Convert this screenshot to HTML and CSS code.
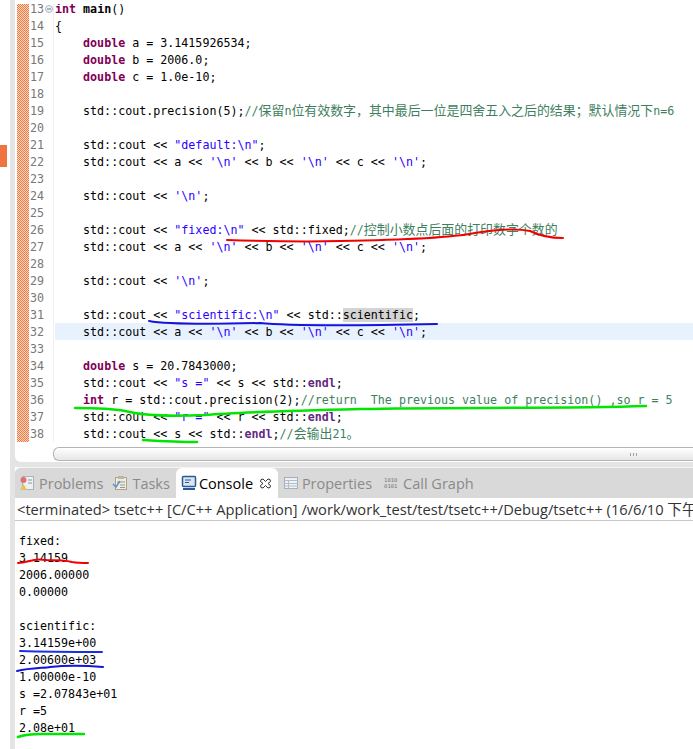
FILE: index.html
```html
<!DOCTYPE html>
<html lang="en">
<head>
  <meta charset="UTF-8">
  <title>tsetc++ - Eclipse</title>
  <link rel="stylesheet" href="styles.css">
</head>
<body>
  <div class="window">
    <!-- Left edge with the orange marker -->
    <div class="left-strip"><div class="marker"></div></div>

    <div class="main">
      <!-- Editor -->
      <div class="editor">
        <div class="lines">
          <div class="ruler"></div>
          <div class="rows">
            <div class="row"><span class="num">13</span><span class="fold"><svg width="8" height="8" viewBox="0 0 8 8"><circle cx="4" cy="4" r="3.500" fill="#eef2f6" stroke="#a9b6c4"/><path d="M2 4h4" stroke="#66788c"/></svg></span><span class="code"><b class="kw">int</b> <strong>main</strong>()</span></div>
            <div class="row"><span class="num">14</span><span class="fold"></span><span class="code">{</span></div>
            <div class="row"><span class="num">15</span><span class="fold"></span><span class="code">    <b class="kw">double</b> a = 3.1415926534;</span></div>
            <div class="row"><span class="num">16</span><span class="fold"></span><span class="code">    <b class="kw">double</b> b = 2006.0;</span></div>
            <div class="row"><span class="num">17</span><span class="fold"></span><span class="code">    <b class="kw">double</b> c = 1.0e-10;</span></div>
            <div class="row"><span class="num">18</span><span class="fold"></span><span class="code"></span></div>
            <div class="row"><span class="num">19</span><span class="fold"></span><span class="code">    std::cout.precision(5);<i class="cm">//<span class="cjk">保留</span>n<span class="cjk">位有效数字，其中最后一位是四舍五入之后的结果；默认情况下</span>n=6</i></span></div>
            <div class="row"><span class="num">20</span><span class="fold"></span><span class="code"></span></div>
            <div class="row"><span class="num">21</span><span class="fold"></span><span class="code">    std::cout &lt;&lt; <em class="str">"default:\n"</em>;</span></div>
            <div class="row"><span class="num">22</span><span class="fold"></span><span class="code">    std::cout &lt;&lt; a &lt;&lt; <em class="str">'\n'</em> &lt;&lt; b &lt;&lt; <em class="str">'\n'</em> &lt;&lt; c &lt;&lt; <em class="str">'\n'</em>;</span></div>
            <div class="row"><span class="num">23</span><span class="fold"></span><span class="code"></span></div>
            <div class="row"><span class="num">24</span><span class="fold"></span><span class="code">    std::cout &lt;&lt; <em class="str">'\n'</em>;</span></div>
            <div class="row"><span class="num">25</span><span class="fold"></span><span class="code"></span></div>
            <div class="row"><span class="num">26</span><span class="fold"></span><span class="code">    std::cout &lt;&lt; <em class="str">"fixed:\n"</em> &lt;&lt; std::fixed;<i class="cm">//<span class="cjk">控制小数点后面的打印数字个数的</span></i></span></div>
            <div class="row"><span class="num">27</span><span class="fold"></span><span class="code">    std::cout &lt;&lt; a &lt;&lt; <em class="str">'\n'</em> &lt;&lt; b &lt;&lt; <em class="str">'\n'</em> &lt;&lt; c &lt;&lt; <em class="str">'\n'</em>;</span></div>
            <div class="row"><span class="num">28</span><span class="fold"></span><span class="code"></span></div>
            <div class="row"><span class="num">29</span><span class="fold"></span><span class="code">    std::cout &lt;&lt; <em class="str">'\n'</em>;</span></div>
            <div class="row"><span class="num">30</span><span class="fold"></span><span class="code"></span></div>
            <div class="row"><span class="num">31</span><span class="fold"></span><span class="code">    std::cout &lt;&lt; <em class="str">"scientific:\n"</em> &lt;&lt; std::<span class="occurrence">scientific</span>;</span></div>
            <div class="row"><span class="num">32</span><span class="fold"></span><span class="code current">    std::cout &lt;&lt; a &lt;&lt; <em class="str">'\n'</em> &lt;&lt; b &lt;&lt; <em class="str">'\n'</em> &lt;&lt; c &lt;&lt; <em class="str">'\n'</em>;</span></div>
            <div class="row"><span class="num">33</span><span class="fold"></span><span class="code"></span></div>
            <div class="row"><span class="num">34</span><span class="fold"></span><span class="code">    <b class="kw">double</b> s = 20.7843000;</span></div>
            <div class="row"><span class="num">35</span><span class="fold"></span><span class="code">    std::cout &lt;&lt; <em class="str">"s ="</em> &lt;&lt; s &lt;&lt; std::<b class="fn">endl</b>;</span></div>
            <div class="row"><span class="num">36</span><span class="fold"></span><span class="code">    <b class="kw">int</b> r = std::cout.precision(2);<i class="cm">//return  The previous value of precision() ,so r = 5</i></span></div>
            <div class="row"><span class="num">37</span><span class="fold"></span><span class="code">    std::cout &lt;&lt; <em class="str">"r ="</em> &lt;&lt; r &lt;&lt; std::<b class="fn">endl</b>;</span></div>
            <div class="row"><span class="num">38</span><span class="fold"></span><span class="code">    std::cout &lt;&lt; s &lt;&lt; std::<b class="fn">endl</b>;<i class="cm">//<span class="cjk">会输出</span>21<span class="cjk">。</span></i></span></div>
          </div>
        </div>
        <div class="scrollbar"><span class="grip"></span></div>
      </div>

      <!-- Console view -->
      <div class="view">
        <div class="tabs">
          <div class="tab">
            <svg class="icon" width="16" height="16" viewBox="0 0 16 16"><rect x="3.500" y="1.500" width="11" height="13" fill="#f0f0f0" stroke="#a9b4c0"/><circle cx="4.500" cy="5" r="3" fill="#e07070"/><path d="M1 15l3.500-6 3.500 6z" fill="#e3c35c"/><path d="M9 5h4M9 8h4" stroke="#8a98a8"/></svg>
            <span>Problems</span>
          </div>
          <div class="tab tab-tasks">
            <svg class="icon" width="16" height="16" viewBox="0 0 16 16"><rect x="3.500" y="2.500" width="11" height="12" fill="#f2ecd8" stroke="#a9a68c"/><rect x="6" y="1" width="6" height="3" fill="#b8b8a8"/><path d="M5 7h8M8 10h5M8 12.500h5" stroke="#8c98a8"/><path d="M1 9l3 3 4-6" fill="none" stroke="#5a94c8" stroke-width="1.500"/></svg>
            <span>Tasks</span>
          </div>
          <div class="tab tab-active">
            <svg class="icon" width="16" height="16" viewBox="0 0 16 16"><rect x="1.500" y="1.500" width="13" height="10" rx="1" fill="#dbe6f2" stroke="#2a5a94" stroke-width="1.500"/><path d="M4 5h6M4 7.500h4" stroke="#2a5a94"/><path d="M2 14h12" stroke="#2a5a94" stroke-width="2"/></svg>
            <span>Console</span>
            <svg class="close" width="11" height="11" viewBox="0 0 11 11"><path d="M1 1.500l2-.5 2.500 2.500L8 1l2 .5.5 2L8 5.500l2.500 2-.5 2-2 .5-2.500-2.500L3 10l-2-.5-.5-2L3 5.500.5 3.500z" fill="#fff" stroke="#333"/></svg>
          </div>
          <div class="tab tab-properties">
            <svg class="icon" width="16" height="16" viewBox="0 0 16 16"><rect x="1.500" y="2.500" width="13" height="11" fill="#eef1f5" stroke="#a4afbc"/><path d="M1.500 5.500h13M5.500 5.500v8M1.500 8.500h13M1.500 11h13" stroke="#b4bdc8"/></svg>
            <span>Properties</span>
          </div>
          <div class="tab tab-graph">
            <span class="bits">1010<br>0101</span>
            <span>Call Graph</span>
          </div>
        </div>
        <div class="status">&lt;terminated&gt; tsetc++ [C/C++ Application] /work/work_test/test/tsetc++/Debug/tsetc++ (16/6/10 下午</div>
        <pre class="output">fixed:
3.14159
2006.00000
0.00000

scientific:
3.14159e+00
2.00600e+03
1.00000e-10
s =2.07843e+01
r =5
2.08e+01</pre>
      </div>
    </div>

    <!-- Hand drawn marks on top of the screenshot -->
    <svg class="marks" width="693" height="749" viewBox="0 0 693 749" fill="none" stroke-linecap="round" stroke-width="2">
      <path stroke="#f00000" d="M227 240 C260 241 300 242 340 241 C400 240 450 238 475 233 C500 229 520 229 530 231 C540 236 550 238 563 238"/>
      <path stroke="#1414e0" d="M149 321 C170 325 220 324 260 323 C290 326 340 326 437 324"/>
      <path class="thick" stroke="#00e600" d="M75 408 C95 408 110 408 125 411 C140 415 160 417 205 415 C240 412 280 411 360 409 C450 407 560 409 646 406"/>
      <path class="thick" stroke="#00e600" d="M143 440 C160 441 180 442 197 442"/>
      <path stroke="#f00000" d="M18 563 C28 563 32 558 45 560 C55 560 65 560 72 562 C78 563 84 563 88 563"/>
      <path stroke="#1a2ee6" d="M20 651 C50 652 80 652 102 652"/>
      <path stroke="#1414e0" d="M17 671 C30 668 45 668 50 667 C70 665 90 666 103 667"/>
      <path class="thick" stroke="#00e600" d="M18 737 C28 733 40 734 50 734 C60 734 72 734 84 734"/>
    </svg>
  </div>
</body>
</html>
```

FILE: styles.css
```css
/* General Body Styling */
html, body {
  margin: 0;
  padding: 0;
  height: 100%;
  overflow: hidden;
  background: white;
}

.window {
  display: flex;
  height: 749px;
  position: relative;
  overflow: hidden;
}

.left-strip {
  width: 10px;
  flex: none;
  padding-top: 145px;
  box-sizing: border-box;
}

.marker {
  width: 7px;
  height: 22px;
  background: #ee7440;
}

.main {
  flex: 1;
  min-width: 0;
  background: #e4e4e4;
  padding-left: 5px;
  display: flex;
  flex-direction: column;
}

/* Editor */
.editor {
  height: 462px;
  flex: none;
  padding-top: 4px;
  box-sizing: border-box;
  background: white;
  border-radius: 0 0 0 6px;
  overflow: hidden;
}

.lines {
  height: 438px;
  overflow: hidden;
  display: flex;
  font-family: "DejaVu Sans Mono", "Noto Sans CJK SC", monospace;
  font-size: 11.67px;
  line-height: 18px;
  color: #000;
}

.ruler {
  width: 12px;
  margin-left: 2px;
  flex: none;
  background-color: #fff;
  background-image: conic-gradient(#ee7a42 25%, #fcd8c4 0 50%, #ee7a42 0 75%, #fcd8c4 0);
  background-size: 2px 2px;
}

.rows {
  flex: 1;
  min-width: 0;
  margin-top: -4px;
}

.row {
  display: flex;
  height: 17px;
}

.num {
  width: 15px;
  flex: none;
  padding-left: 1px;
  color: #787878;
}

.fold {
  width: 8px;
  flex: none;
  border-right: 1px solid #f0f0f0;
  display: flex;
  align-items: center;
}

.code {
  flex: 1;
  margin-left: 1px;
  white-space: pre;
  overflow: hidden;
}

.current {
  background: #e8f2fe;
}

.occurrence {
  background: #d4d4d4;
}

.code strong {
  font-weight: bold;
}

.kw {
  color: #7f0055;
  font-weight: bold;
}

.fn {
  color: #642880;
  font-weight: bold;
}

.str {
  color: #2a00ff;
  font-style: normal;
}

.cm {
  color: #3f7f5f;
  font-style: normal;
}

.cjk {
  font-size: 12.93px;
  line-height: 1;
}

.scrollbar {
  height: 12px;
  margin: 5px 0 0 38px;
  border: 1px solid #b4b4b4;
  border-right: none;
  border-radius: 6px 0 0 6px;
  background: linear-gradient(#ffffff, #e6e6e6);
  display: flex;
  justify-content: flex-end;
  align-items: center;
  padding-right: 56px;
}

.grip {
  width: 7px;
  height: 3px;
  background: repeating-linear-gradient(90deg, #a0a0a0 0 1px, transparent 1px 3px);
}

/* Console view */
.view {
  flex: 1;
  margin-top: 5px;
  background: white;
  display: flex;
  flex-direction: column;
  min-height: 0;
}

.tabs {
  height: 31px;
  flex: none;
  display: flex;
  background: #d9d9d9;
  border-top: 1px solid #f4f4f4;
  border-radius: 6px 0 0 0;
  box-sizing: border-box;
  font-family: "Open Sans", sans-serif;
  font-size: 14.5px;
  color: #8a8a8a;
}

.tab {
  display: flex;
  align-items: center;
  gap: 4px;
  padding-left: 4px;
}

.icon {
  flex: none;
}

.tab-tasks {
  margin-left: 5px;
}

.tab-active {
  margin-left: 6px;
  width: 102px;
  box-sizing: border-box;
  padding-left: 5px;
  gap: 2px;
  background: white;
  color: #000;
  border-radius: 6px 6px 0 0;
}

.close {
  margin-left: 5px;
}

.tab-properties {
  margin-left: 1px;
  gap: 3px;
}

.tab-graph {
  margin-left: 8px;
}

.bits {
  font-family: "DejaVu Sans Mono", monospace;
  font-size: 5.500px;
  line-height: 6px;
  color: #777;
  width: 15px;
}

.status {
  height: 22px;
  flex: none;
  padding-left: 2px;
  border-bottom: 1px solid #c8c8c8;
  font-family: "Open Sans", "Noto Sans CJK SC", sans-serif;
  font-size: 14.66px;
  line-height: 22px;
  color: #333;
  white-space: nowrap;
  overflow: hidden;
}

.output {
  margin: 12px 0 0 4px;
  font-family: "DejaVu Sans Mono", monospace;
  font-size: 11.67px;
  line-height: 17px;
  color: #000;
}

/* Pen marks lie over the text */
.marks {
  position: absolute;
  top: 0;
  left: 0;
  pointer-events: none;
}

.marks .thick {
  stroke-width: 2.5;
}
```
